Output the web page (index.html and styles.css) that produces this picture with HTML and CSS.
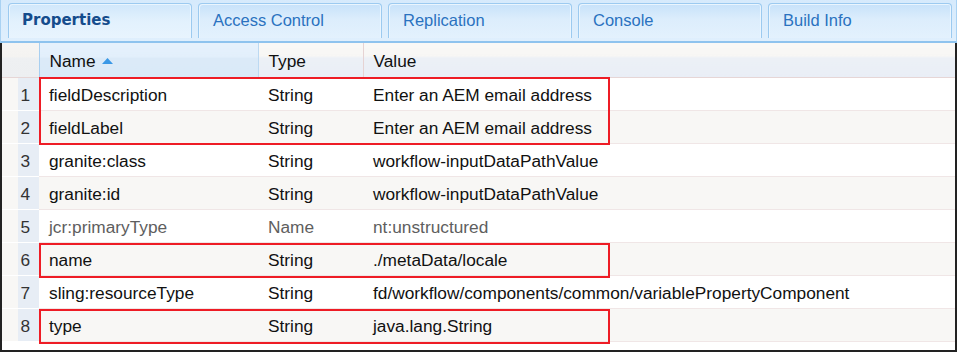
FILE: index.html
```html
<!DOCTYPE html>
<html>
<head>
<meta charset="utf-8">
<link rel="stylesheet" href="styles.css">
</head>
<body>
<div class="frame">
  <div class="tabstrip">
    <div class="tab active">Properties</div>
    <div class="tab">Access Control</div>
    <div class="tab">Replication</div>
    <div class="tab">Console</div>
    <div class="tab">Build Info</div>
  </div>
  <div class="grid">
    <table class="props">
      <colgroup>
        <col class="c-num"><col class="c-name"><col class="c-type"><col>
      </colgroup>
      <thead>
        <tr>
          <th class="h-num"></th>
          <th class="h-name sorted">Name<svg class="sort-arrow" width="11" height="6" viewBox="0 0 11 6"><path d="M0 6 L5.5 0 L11 6 Z" fill="#3a98e6"/></svg></th>
          <th class="h-type">Type</th>
          <th class="h-value">Value</th>
        </tr>
      </thead>
      <tbody>
        <tr><td class="num">1</td><td>fieldDescription</td><td>String</td><td>Enter an AEM email address</td></tr>
        <tr class="alt"><td class="num">2</td><td>fieldLabel</td><td>String</td><td>Enter an AEM email address</td></tr>
        <tr><td class="num">3</td><td>granite:class</td><td>String</td><td>workflow-inputDataPathValue</td></tr>
        <tr class="alt"><td class="num">4</td><td>granite:id</td><td>String</td><td>workflow-inputDataPathValue</td></tr>
        <tr class="muted"><td class="num">5</td><td>jcr:primaryType</td><td>Name</td><td>nt:unstructured</td></tr>
        <tr class="alt"><td class="num">6</td><td>name</td><td>String</td><td>./metaData/locale</td></tr>
        <tr><td class="num">7</td><td>sling:resourceType</td><td>String</td><td>fd/workflow/components/common/variablePropertyComponent</td></tr>
        <tr class="alt"><td class="num">8</td><td>type</td><td>String</td><td>java.lang.String</td></tr>
      </tbody>
    </table>
    <div class="mark mark-a"></div>
    <div class="mark mark-b"></div>
    <div class="mark mark-c"></div>
  </div>
</div>
</body>
</html>
```

FILE: styles.css
```css
html, body {
  margin: 0;
  padding: 0;
  background: #ffffff;
}

.frame {
  width: 957px;
  height: 352px;
  display: flex;
  flex-direction: column;
  font-family: "Liberation Sans", Arial, sans-serif;
  overflow: hidden;
}

.tabstrip {
  flex: none;
  display: flex;
  align-items: flex-start;
  gap: 6px;
  padding: 3px 0 0 7px;
  box-sizing: border-box;
  height: 43px;
  background: linear-gradient(#d6eafc, #dfeffd);
  border-bottom: 2px solid #8ec3ee;
  border-left: 1px solid #a9d2f3;
  border-right: 1px solid #a9d2f3;
}

.tab {
  width: 184px;
  height: 35px;
  box-sizing: border-box;
  border: 1px solid #9ccaf0;
  border-bottom: none;
  border-radius: 4px 4px 0 0;
  box-shadow: inset 1px 1px 0 #eaf5fe, inset -1px 0 0 #eaf5fe;
  background: linear-gradient(#c7e2fa, #dcedfc 45%, #e3f1fd);
  padding: 0 0 2px 14px;
  display: flex;
  align-items: center;
  font-size: 16.5px;
  color: #2a72c0;
}

.tab.active {
  font-family: "DejaVu Sans", Verdana, sans-serif;
  font-weight: bold;
  font-size: 15px;
  padding-left: 13px;
  color: #154c8c;
  background: linear-gradient(#d0e7fb, #e2f1fd 50%, #e8f4fe);
}

.grid {
  position: relative;
  flex: 1;
  border-left: 2px solid #222;
  border-right: 2px solid #222;
  border-bottom: 2px solid #222;
  background: #fff;
}

.props {
  width: 100%;
  border-collapse: collapse;
  table-layout: fixed;
  font-size: 17.3px;
  color: #111;
}

.c-num { width: 37px; }
.c-name { width: 219px; }
.c-type { width: 105px; }

.props th {
  height: 32px;
  padding: 2px 0 0 10px;
  text-align: left;
  font-weight: normal;
  background: linear-gradient(#f9f8f6 0%, #f7f6f4 38%, #ecf0f6 44%, #e9eef6 100%);
  border-bottom: 1px solid #e6d6d6;
}

.props th.h-num {
  padding: 0;
  background: linear-gradient(#f6f5f3 0%, #f4f3f1 40%, #eef0f2 45%, #edeff1 100%);
}

.props th.sorted {
  background: linear-gradient(#e6f1fc 0%, #e2effb 40%, #dbeaf8 45%, #d9e9f8 100%);
  border-left: 1px solid #a8cff0;
  border-right: 1px solid #bcd9f2;
}

.props th.h-value {
  border-left: 1px solid #e6d3d3;
}

.sort-arrow {
  margin-left: 6px;
  vertical-align: 3px;
}

.props td {
  height: 30px;
  padding: 2px 0 0 10px;
  border-bottom: 1px solid #f0e6e6;
  white-space: nowrap;
  overflow: hidden;
}

.props tr.alt td {
  background: #f8f7f5;
}

.props td.num,
.props tr.alt td.num {
  padding: 2px 9px 0 0;
  text-align: right;
  color: #333;
  background: linear-gradient(to right, #f8f7f5 0 16px, #e7edf5 16px);
  border-bottom: 1px solid #ffffff;
}

.props tr.muted td {
  color: #5e5e5e;
}

.props tr.muted td.num {
  color: #333;
}

.mark {
  position: absolute;
  left: 37px;
  width: 571px;
  border: 2px solid #ee1c25;
  box-sizing: border-box;
}

.mark-a { top: 34px; height: 68px; }
.mark-b { top: 200px; height: 35px; }
.mark-c { top: 266px; height: 35px; }
```
